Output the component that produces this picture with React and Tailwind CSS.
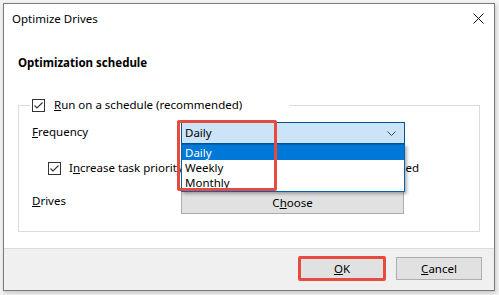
import { useState } from 'react';

const font = { fontFamily: '"Noto Sans", "Open Sans", sans-serif' };

function CheckBox({ checked = true }) {
  return (
    <span className="w-[13px] h-[13px] border border-[#333333] bg-white flex items-center justify-center shrink-0">
      {checked && (
        <svg width="11" height="11" viewBox="0 0 11 11">
          <polyline points="1.5,5.5 4,8 9.5,2.5" fill="none" stroke="#333333" strokeWidth="1.1" />
        </svg>
      )}
    </span>
  );
}

function Button({ children, className = '' }) {
  return (
    <button className={`h-[23px] w-[86px] border border-[#adadad] bg-[#e1e1e1] text-[11.5px] text-black flex items-center justify-center ${className}`}>
      {children}
    </button>
  );
}

export default function App() {
  const [freq, setFreq] = useState('Daily');
  const options = ['Daily', 'Weekly', 'Monthly'];

  return (
    <div className="w-[499px] h-[295px] bg-[#f2f2f2] pt-[3px] pl-[3px]" style={font}>
      <div className="w-[492px] h-[288px] border border-[#7a7a7a] bg-white flex flex-col shadow-[1px_2px_4px_rgba(0,0,0,0.18)] text-[11.5px] text-black">
        {/* title bar */}
        <div className="h-[29px] flex items-center justify-between pl-[8px] pr-[9px] shrink-0">
          <span className="leading-none pt-[1px]">Optimize Drives</span>
          <svg width="11" height="11" viewBox="0 0 11 11" className="mr-[1px]">
            <path d="M0.5 0.5 L10.5 10.5 M10.5 0.5 L0.5 10.5" stroke="#111111" strokeWidth="1" />
          </svg>
        </div>

        {/* content */}
        <div className="flex-1 pl-[14px] pr-[13px] pt-[22px]">
          <h2 className="font-bold leading-[16px]">Optimization schedule</h2>

          <fieldset className="mt-[26px] border border-[#dcdcdc] h-[135px] w-[462px] px-0">
            <legend className="ml-[11px] w-[259px] pl-[2px] bg-white flex items-center gap-[9px] h-[16px]">
              <CheckBox />
              <span><u>R</u>un on a schedule (recommended)</span>
            </legend>

            <div className="pl-[13px] pt-[9px]">
              <div className="flex items-start h-[22px]">
                <span className="w-[149px] leading-[16px] pt-[2px]"><u>F</u>requency</span>
                <div className="relative z-10">
                  <div className="w-[224px] h-[22px] border border-[#005499] bg-[#cce4f7] flex items-center justify-between pl-[3px] pr-[8px]">
                    <span>{freq}</span>
                    <svg width="9" height="5" viewBox="0 0 9 5">
                      <polyline points="0.5,0.5 4.5,4.5 8.5,0.5" fill="none" stroke="#444444" strokeWidth="1" />
                    </svg>
                  </div>
                  <ul className="absolute left-0 top-full w-[224px] border border-[#0063b1] bg-white pb-[1px] shadow-[2px_2px_3px_rgba(0,0,0,0.3)]">
                    {options.map((o) => (
                      <li
                        key={o}
                        onClick={() => setFreq(o)}
                        className={`h-[15px] leading-[15px] pl-[3px] ${o === freq ? 'bg-[#0078d7] text-white' : ''}`}
                      >
                        {o}
                      </li>
                    ))}
                  </ul>
                  <div className="absolute -left-[4px] -top-[2px] w-[100px] h-[71px] border-[3px] border-[#e84a3e] rounded-[2px] pointer-events-none" />
                </div>
              </div>

              <div className="flex items-center gap-[8px] pl-[16px] mt-[16px] h-[16px]">
                <CheckBox />
                <span className="whitespace-nowrap">I<u>n</u>crease task priority, if 3 consecutive scheduled runs are missed</span>
              </div>

              <div className="flex items-start mt-[15px]">
                <span className="w-[149px] leading-[16px] pt-[2px]"><u>D</u>rives</span>
                <Button className="w-[223px]">C<u>h</u>oose</Button>
              </div>
            </div>
          </fieldset>
        </div>

        {/* footer */}
        <div className="h-[42px] border-t border-[#dcdcdc] bg-[#f0f0f0] flex items-center justify-end gap-[11px] pr-[12px] pb-[2px] shrink-0">
          <div className="relative">
            <Button><u>O</u>K</Button>
            <div className="absolute -inset-[1px] border-[3px] border-[#e84a3e] rounded-[2px] pointer-events-none" />
          </div>
          <Button><u>C</u>ancel</Button>
        </div>
      </div>
    </div>
  );
}
